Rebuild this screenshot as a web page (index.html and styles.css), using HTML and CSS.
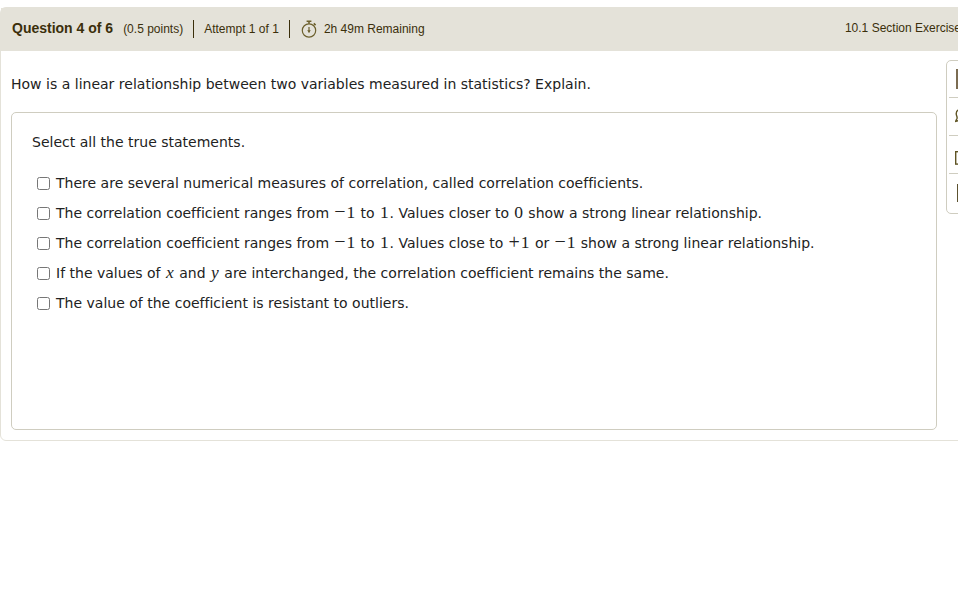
FILE: index.html
```html
<!DOCTYPE html>
<html lang="en">
<head>
    <meta charset="UTF-8">
    <meta name="viewport" content="width=device-width, initial-scale=1.0">
    <title>10.1 Section Exercises</title>
    <link rel="stylesheet" href="styles.css">
</head>
<body>
    <div class="question">
        <div class="question-header">
            <span class="title">Question 4 of 6</span>
            <span class="points">(0.5 points)</span>
            <span class="attempt">Attempt 1 of 1</span>
            <svg class="timer-icon" width="16" height="18" viewBox="0 0 16 18" fill="none" stroke="#6b5f2c">
                <circle cx="8" cy="10.5" r="6.7" stroke-width="1.2"/>
                <path d="M5.6 1.2h4.8M8 1.2v2.6M12.8 3.4l1.8 1.7" stroke-width="1.6"/>
                <path d="M8 7v5.4" stroke-width="1.2"/>
                <path d="M6.2 10.2h3.6L8 12.8z" fill="#6b5f2c" stroke="none"/>
            </svg>
            <span class="time">2h 49m Remaining</span>
            <span class="assignment">10.1 Section Exercises</span>
        </div>

        <div class="question-body">
            <div class="content">
                <p class="prompt">How is a linear relationship between two variables measured in statistics? Explain.</p>
                <div class="answer-box">
                    <p class="instruction">Select all the true statements.</p>
                    <label><input type="checkbox"><span>There are several numerical measures of correlation, called correlation coefficients.</span></label>
                    <label><input type="checkbox"><span>The correlation coefficient ranges from <span class="math"><span class="op">−</span>1</span> to <span class="math">1</span>. Values closer to <span class="math">0</span> show a strong linear relationship.</span></label>
                    <label><input type="checkbox"><span>The correlation coefficient ranges from <span class="math"><span class="op">−</span>1</span> to <span class="math">1</span>. Values close to <span class="math"><span class="op plus">+</span>1</span> or <span class="math"><span class="op">−</span>1</span> show a strong linear relationship.</span></label>
                    <label><input type="checkbox"><span>If the values of <i class="math">x</i> and <i class="math">y</i> are interchanged, the correlation coefficient remains the same.</span></label>
                    <label><input type="checkbox"><span>The value of the coefficient is resistant to outliers.</span></label>
                </div>
            </div>

            <div class="tools">
                <div class="tool">
                    <svg width="18" height="20" viewBox="0 0 18 20"><rect x="1" width="17" height="20" fill="#7b6c52"/></svg>
                </div>
                <div class="tool">
                    <svg class="upper" width="18" height="14" viewBox="0 0 18 14" fill="none" stroke="#5f5423" stroke-width="1.4"><path d="M4 .7C1.8 1.5 1 3.5 1.3 5.5 1.5 7 2.5 8 2 9.5L.6 12.3l4-1"/></svg>
                </div>
                <div class="tool">
                    <svg class="lower" width="18" height="14" viewBox="0 0 18 14" fill="none" stroke="#5f5423" stroke-width="1.4"><rect x=".7" y=".7" width="16" height="12.4"/></svg>
                </div>
                <div class="tool">
                    <svg width="18" height="18" viewBox="0 0 18 18"><rect x="2" width="16" height="18" fill="#5c5230"/></svg>
                </div>
            </div>
        </div>
    </div>
</body>
</html>
```

FILE: styles.css
```css
body {
    margin: 0;
    padding-top: 7px;
    overflow: hidden;
    background: #fff;
    color: #222;
    font-family: "DejaVu Sans", Verdana, sans-serif;
    font-size: 14px;
    letter-spacing: 0.008px;
}

p {
    margin: 0;
}

.question {
    box-sizing: border-box;
    width: 978px;
    height: 434px;
    border: 1px solid #e4e2d9;
    border-radius: 6px;
}

.question-header {
    display: flex;
    align-items: center;
    box-sizing: border-box;
    height: 43px;
    padding: 0 10px 2px 11px;
    background: #e4e2d9;
    color: #3b2f0b;
    font-family: "Liberation Sans", Arial, sans-serif;
    font-size: 12px;
    letter-spacing: normal;
    white-space: nowrap;
}

.title {
    margin-right: 10px;
    padding-bottom: 2px;
    font-size: 14px;
    font-weight: bold;
}

.points,
.attempt {
    padding-top: 1px;
    padding-right: 10px;
    margin-right: 10px;
    border-right: 1px solid #3b2f0b;
    line-height: 17px;
}

.timer-icon {
    margin-left: 1px;
    margin-right: 7px;
}

.time {
    padding-top: 1px;
}

.assignment {
    margin-left: auto;
    padding-bottom: 1px;
}

.question-body {
    display: flex;
    align-items: flex-start;
    padding: 9px 0 0 10px;
}

.content {
    flex: none;
    width: 926px;
}

.prompt {
    padding-top: 14px;
    margin-bottom: 18px;
    line-height: 20px;
}

.answer-box {
    box-sizing: border-box;
    height: 318px;
    padding: 19px 20px;
    border: 1px solid #cfcdc0;
    border-radius: 5px;
}

.instruction {
    margin-bottom: 16px;
    line-height: 20px;
}

label {
    display: flex;
    align-items: center;
    height: 30px;
    line-height: 30px;
    white-space: nowrap;
}

input {
    width: 13px;
    height: 13px;
    margin: 0 6px 0 5px;
}

.math {
    margin: 0 0.8px;
    font-family: "Liberation Serif", "Times New Roman", serif;
    font-size: 17.5px;
    line-height: 1;
}

i.math {
    margin: 0 1px;
}

.op {
    margin-right: 1px;
    font-size: 20px;
    line-height: 1;
}

.plus {
    vertical-align: -1px;
}

.tools {
    box-sizing: border-box;
    flex: none;
    width: 40px;
    height: 154px;
    margin-left: 9px;
    padding-left: 2px;
    border: 1px solid #cfcdc0;
    border-radius: 5px;
}

.tool {
    display: flex;
    align-items: center;
    box-sizing: border-box;
    height: 38px;
    padding-left: 6px;
    border-bottom: 1px solid #cfcdc0;
}

.tool:first-child {
    height: 37px;
}

.tool .upper {
    margin-bottom: 2px;
}

.tool .lower {
    margin-top: 7px;
}

.tool:last-child {
    border-bottom: none;
}
```
